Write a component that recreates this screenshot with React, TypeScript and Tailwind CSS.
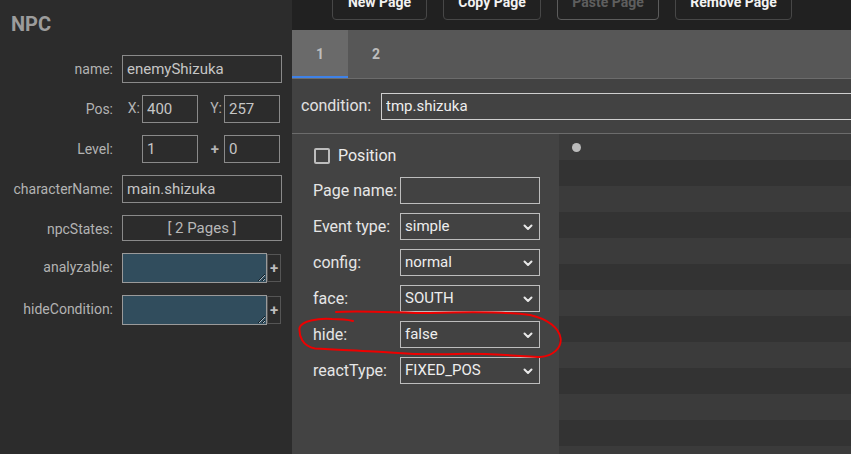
import { ReactNode } from "react";

const font = "font-['Roboto','Noto_Sans',sans-serif]";

function SideRow({ label, children }: { label: string; children: ReactNode }) {
  return (
    <div className="flex items-start">
      <div className="w-[113px] shrink-0 pt-[5px] text-right text-[14px] leading-[18px] text-[#b3b3b3]">{label}</div>
      <div className="ml-[9px]">{children}</div>
    </div>
  );
}

function SideInput({ value, className = "" }: { value: string; className?: string }) {
  return (
    <input
      readOnly
      value={value}
      className={`h-[28px] border border-[#8a8a8a] bg-[#2c2c2c] px-[4px] text-[15px] text-[#c6c6c6] outline-none ${className}`}
    />
  );
}

function SideTextarea() {
  return (
    <div className="flex items-start">
      <textarea
        readOnly
        className="h-[30px] w-[145px] border border-[#9a9a9a] bg-[#314d5d] text-[14px] text-[#ddd] outline-none"
      />
      <button className="mt-[1px] h-[28px] w-[14px] border border-[#555] text-[15px] leading-none font-bold text-[#bdbdbd]">
        +
      </button>
    </div>
  );
}

function Chevron() {
  return (
    <svg width="12" height="12" viewBox="0 0 12 12" className="shrink-0">
      <path d="M2.5 4.5 L6 8 L9.5 4.5" fill="none" stroke="#e8e8e8" strokeWidth="2" strokeLinecap="round" strokeLinejoin="round" />
    </svg>
  );
}

function FormRow({ label, children }: { label: string; children: ReactNode }) {
  return (
    <div className="flex h-[27px] items-center">
      <div className="w-[87px] shrink-0 text-[16px] leading-none text-[#e6e6e6]">{label}</div>
      {children}
    </div>
  );
}

function Select({ value }: { value: string }) {
  return (
    <div className="flex h-[27px] w-[140px] items-center justify-between border border-[#bdbdbd] bg-[#424242] pl-[4px] pr-[5px] text-[15px] text-[#eeeeee]">
      <span>{value}</span>
      <Chevron />
    </div>
  );
}

const buttons = [
  { label: "New Page", w: "w-[95px]", disabled: false },
  { label: "Copy Page", w: "w-[98px]", disabled: false },
  { label: "Paste Page", w: "w-[102px]", disabled: true },
  { label: "Remove Page", w: "w-[117px]", disabled: false },
];

export default function App() {
  return (
    <div className={`relative flex h-[454px] w-[851px] overflow-hidden ${font}`}>
      <aside className="h-full w-[292px] shrink-0 bg-[#2c2c2c]">
        <h2 className="pl-[11px] pt-[12px] text-[20px] leading-[24px] font-bold text-[#9c9c9c]">NPC</h2>
        <div className="mt-[19px] flex flex-col gap-[12px]">
          <SideRow label="name:">
            <SideInput value="enemyShizuka" className="w-[160px]" />
          </SideRow>
          <SideRow label="Pos:">
            <div className="grid grid-cols-[20px_56px_26px_56px] items-start text-[14px] text-[#b3b3b3]">
              <span className="pt-[3px] pr-[2px] text-right">X:</span>
              <SideInput value="400" className="w-[56px]" />
              <span className="pt-[3px] pr-[2px] text-right">Y:</span>
              <SideInput value="257" className="w-[56px]" />
            </div>
          </SideRow>
          <SideRow label="Level:">
            <div className="grid grid-cols-[20px_56px_26px_56px] items-start text-[15px] text-[#b3b3b3]">
              <span />
              <SideInput value="1" className="w-[56px]" />
              <span className="pt-[3px] pr-[5px] text-right font-bold">+</span>
              <SideInput value="0" className="w-[56px]" />
            </div>
          </SideRow>
          <SideRow label="characterName:">
            <SideInput value="main.shizuka" className="w-[160px]" />
          </SideRow>
          <SideRow label="npcStates:">
            <div className="flex h-[26px] w-[160px] items-center justify-center border border-[#8a8a8a] text-[15px] text-[#b8b8b8]">
              [ 2 Pages ]
            </div>
          </SideRow>
          <SideRow label="analyzable:">
            <SideTextarea />
          </SideRow>
          <SideRow label="hideCondition:">
            <SideTextarea />
          </SideRow>
        </div>
      </aside>

      <main className="flex min-w-0 flex-1 flex-col">
        <div className="flex h-[30px] shrink-0 items-end gap-[16px] bg-[#212121] pb-[10px] pl-[40px]">
          {buttons.map((b) => (
            <button
              key={b.label}
              className={`h-[36px] shrink-0 rounded-[4px] border text-[14px] font-bold ${b.w} ${
                b.disabled ? "border-[#5c5c5c] text-[#5e5e5e]" : "border-[#474747] text-[#f2f2f2]"
              }`}
            >
              {b.label}
            </button>
          ))}
        </div>

        <div className="flex h-[48px] shrink-0 bg-[#575757]">
          <div className="flex w-[56px] items-center justify-center border-b-2 border-[#3f82e8] bg-[#6a6a6a] pt-[2px] text-[14px] font-bold text-[#bdbdbd]">
            1
          </div>
          <div className="flex w-[56px] items-center justify-center text-[14px] font-bold text-[#bdbdbd]">2</div>
        </div>

        <div className="flex h-[56px] shrink-0 items-center overflow-hidden border-y border-[#6c6c6c] bg-[#424242] pl-[9px]">
          <span className="w-[80px] shrink-0 text-[16px] text-[#e2e2e2]">condition:</span>
          <input
            readOnly
            value="tmp.shizuka"
            className="h-[27px] w-[520px] shrink-0 border border-[#cfcfcf] bg-[#424242] px-[4px] text-[15px] text-[#eeeeee] outline-none"
          />
        </div>

        <div className="flex min-h-0 flex-1">
          <div className="w-[267px] shrink-0 bg-[#434343] pl-[21px] pt-[14px]">
            <label className="flex h-[16px] items-center gap-[8px] pl-[1px]">
              <span className="h-[16px] w-[16px] rounded-[2px] border-2 border-[#bdbdbd]" />
              <span className="text-[16px] text-[#ececec]">Position</span>
            </label>
            <div className="mt-[13px] flex flex-col gap-[9px]">
              <FormRow label="Page name:">
                <div className="h-[27px] w-[140px] border border-[#bdbdbd] bg-[#424242]" />
              </FormRow>
              <FormRow label="Event type:">
                <Select value="simple" />
              </FormRow>
              <FormRow label="config:">
                <Select value="normal" />
              </FormRow>
              <FormRow label="face:">
                <Select value="SOUTH" />
              </FormRow>
              <FormRow label="hide:">
                <Select value="false" />
              </FormRow>
              <FormRow label="reactType:">
                <Select value="FIXED_POS" />
              </FormRow>
            </div>
          </div>

          <div className="flex min-w-0 flex-1 flex-col">
            <div className="flex h-[26px] shrink-0 items-center bg-[#3b3b3b] pl-[13px]">
              <span className="h-[9px] w-[9px] rounded-full bg-[#bcbcbc]" />
            </div>
            {Array.from({ length: 12 }).map((_, i) => (
              <div key={i} className={`h-[26px] shrink-0 ${i % 2 === 0 ? "bg-[#333333]" : "bg-[#3b3b3b]"}`} />
            ))}
          </div>
        </div>
      </main>

      {/* red hand-drawn mark round the "hide" row */}
      <svg className="pointer-events-none absolute inset-0" width="851" height="454" viewBox="0 0 851 454">
        <path
          d="M336,312 C360,310 400,313 430,313 C460,312 500,311 530,315 C548,319 559,328 560.5,338 C562,348 553,356 540,357 C520,356 480,353 457,354 C430,355 410,354 390,352.5 C370,351 340,350 315,348.5 C302,346 299,336 299.5,328 C301,321 318,318 332,319 C342,319 349,320 353,321"
          fill="none"
          stroke="#ee0000"
          strokeWidth="2"
          strokeLinecap="round"
          strokeLinejoin="round"
        />
      </svg>
    </div>
  );
}
